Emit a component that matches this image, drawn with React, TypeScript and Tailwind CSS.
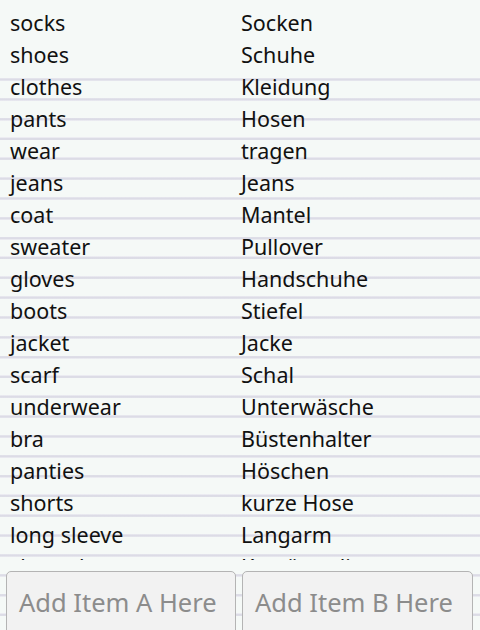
const rows: [string, string][] = [
  ["socks", "Socken"],
  ["shoes", "Schuhe"],
  ["clothes", "Kleidung"],
  ["pants", "Hosen"],
  ["wear", "tragen"],
  ["jeans", "Jeans"],
  ["coat", "Mantel"],
  ["sweater", "Pullover"],
  ["gloves", "Handschuhe"],
  ["boots", "Stiefel"],
  ["jacket", "Jacke"],
  ["scarf", "Schal"],
  ["underwear", "Unterwäsche"],
  ["bra", "Büstenhalter"],
  ["panties", "Höschen"],
  ["shorts", "kurze Hose"],
  ["long sleeve", "Langarm"],
  ["short sleeve", "Kurzärmelig"],
];

export default function App() {
  return (
    <div
      className="w-[480px] h-[630px] overflow-hidden bg-[#f5f9f7] bg-no-repeat bg-[position:0_78px] bg-[size:100%_560px] bg-[image:repeating-linear-gradient(to_bottom,#ececf2_0px,#dcdce6_1px,#dcdce6_2px,#ececf2_3px,transparent_3px,transparent_19.83px)] flex flex-col"
      style={{ fontFamily: '"Noto Sans", "Open Sans", sans-serif' }}
    >
      {/* word list */}
      <div className="shrink-0 h-[560px] overflow-hidden pt-[7px]">
        {rows.map(([a, b]) => (
          <div key={a} className="flex h-[32px] text-[21.5px] leading-[32px] text-[#111]">
            <div className="w-[241px] pl-[10px]">{a}</div>
            <div className="flex-1">{b}</div>
          </div>
        ))}
      </div>

      {/* inputs */}
      <div className="shrink-0 flex mt-[11px] pl-[6px] gap-[6px]">
        <div className="w-[230px] h-[70px] rounded-[5px] border border-[#b4b4b4] bg-[#f2f2f2] pl-[12px] pt-[14px] text-[25.5px] leading-[32px] text-[#8c8c8c] whitespace-nowrap">
          Add Item A Here
        </div>
        <div className="w-[231px] h-[70px] rounded-[5px] border border-[#b4b4b4] bg-[#f2f2f2] pl-[12px] pt-[14px] text-[25.5px] leading-[32px] text-[#8c8c8c] whitespace-nowrap">
          Add Item B Here
        </div>
      </div>
    </div>
  );
}
